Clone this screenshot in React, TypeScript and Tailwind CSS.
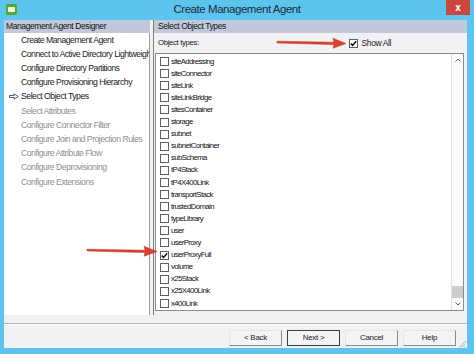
import React from 'react';

const steps = [
  { label: 'Create Management Agent', enabled: true },
  { label: 'Connect to Active Directory Lightweight Directory Services', enabled: true },
  { label: 'Configure Directory Partitions', enabled: true },
  { label: 'Configure Provisioning Hierarchy', enabled: true },
  { label: 'Select Object Types', enabled: true, current: true },
  { label: 'Select Attributes', enabled: false },
  { label: 'Configure Connector Filter', enabled: false },
  { label: 'Configure Join and Projection Rules', enabled: false },
  { label: 'Configure Attribute Flow', enabled: false },
  { label: 'Configure Deprovisioning', enabled: false },
  { label: 'Configure Extensions', enabled: false },
];

const objectTypes = [
  'siteAddressing',
  'siteConnector',
  'siteLink',
  'siteLinkBridge',
  'sitesContainer',
  'storage',
  'subnet',
  'subnetContainer',
  'subSchema',
  'tP4Stack',
  'tP4X400Link',
  'transportStack',
  'trustedDomain',
  'typeLibrary',
  'user',
  'userProxy',
  'userProxyFull',
  'volume',
  'x25Stack',
  'x25X400Link',
  'x400Link',
];

const CheckBox = ({ checked = false }: { checked?: boolean }) => (
  <span className="flex h-[9px] w-[9px] shrink-0 items-center justify-center border border-[#5f5f5f] bg-white">
    {checked && (
      <svg width="7" height="7" viewBox="0 0 7 7">
        <path d="M0.8 3.6 L2.6 5.4 L6.2 1.2" fill="none" stroke="#111" strokeWidth="1.5" />
      </svg>
    )}
  </span>
);

const Button = ({ label, isDefault }: { label: string; isDefault?: boolean }) => (
  <div
    className={
      'flex h-[16px] w-[53px] items-center justify-center bg-[#f4f3f5] text-[8px] tracking-[-0.3px] text-[#222] ' +
      (isDefault
        ? 'border border-[#3c3c3c]'
        : 'border border-t-[#e4e4e4] border-l-[#e4e4e4] border-r-[#8a8a8a] border-b-[#8a8a8a]')
    }
  >
    {label}
  </div>
);

const RedArrow = ({ className, width }: { className: string; width: number }) => (
  <svg className={className} width={width} height="12" viewBox={`0 0 ${width} 12`}>
    <path
      d={`M1 4.2 L${width - 13} 5.2 L${width - 14} 1.2 L${width - 1} 6.6 L${width - 14} 11.2 L${width - 13} 7.6 L1 6 Z`}
      fill="#d8402f"
      stroke="#c23525"
      strokeWidth="0.5"
      strokeLinejoin="round"
    />
  </svg>
);

export default function App() {
  return (
    <div className="relative h-[354px] w-[474px] overflow-hidden bg-[#5cc5ef] font-['Liberation_Sans',Arial,sans-serif]">
      {/* title bar */}
      <div className="relative flex h-[20px] items-center justify-center">
        <div className="absolute left-[6px] top-[4px] flex h-[11px] w-[11px] items-center justify-center rounded-[1px] bg-[#5aa632]">
          <div className="h-[5px] w-[7px] rounded-[1px] bg-[#e9f5d6]" />
        </div>
        <span className="text-[11.5px] leading-none tracking-[-0.45px] text-[#1d2b3a]">Create Management Agent</span>
        <div className="absolute right-[4px] top-0 flex h-[15px] w-[24px] items-center justify-center bg-[#c9473d] text-[10px] font-bold leading-none text-white">
          x
        </div>
      </div>

      {/* client area */}
      <div className="ml-[4px] flex h-[328px] w-[463px] flex-col bg-[#f2f1f3]">
        <div className="flex h-[295px]">
          {/* left pane */}
          <div className="flex w-[146px] flex-col">
            <div className="flex h-[13px] items-center bg-[#bfc9d9] pl-[2px] text-[8.5px] leading-none tracking-[-0.4px] text-[#111]">
              Management Agent Designer
            </div>
            <div className="flex-1 overflow-hidden border-r border-r-[#9a9a9a] bg-white">
              {steps.map((s) => (
                <div key={s.label} className="flex h-[14.2px] items-center whitespace-nowrap text-[8.7px] leading-none tracking-[-0.5px]">
                  <span className="flex w-[17px] shrink-0 items-center justify-end pr-[2px]">
                    {s.current && (
                      <svg width="10" height="7" viewBox="0 0 10 7">
                        <path d="M0.5 2.5 H5 V0.8 L9.3 3.5 L5 6.2 V4.5 H0.5 Z" fill="#fff" stroke="#2b4a8a" strokeWidth="0.9" />
                      </svg>
                    )}
                  </span>
                  <span className={s.enabled ? 'text-[#1a1a1a]' : 'text-[#8f8f8f]'}>{s.label}</span>
                </div>
              ))}
            </div>
          </div>

          {/* splitter */}
          <div className="w-[4px] border-r border-r-[#7d7d7d]" />

          {/* right pane */}
          <div className="flex flex-1 flex-col">
            <div className="flex h-[13px] items-center bg-[#bfc9d9] pl-[4px] text-[8.5px] leading-none tracking-[-0.4px] text-[#111]">
              Select Object Types
            </div>
            <div className="flex h-[20px] items-center justify-between pl-[4px] pr-[76px] text-[7.8px] tracking-[-0.35px] text-[#1a1a1a]">
              <span>Object types:</span>
              <span className="flex items-center gap-[4px] text-[8.5px] tracking-[-0.4px]">
                <CheckBox checked />
                Show All
              </span>
            </div>
            <div className="ml-[1px] mr-[3px] flex h-[258px] border border-[#8c8c8c] bg-white">
              <div className="flex-1 overflow-hidden pl-[4px] pt-[1.5px]">
                {objectTypes.map((t) => (
                  <div key={t} className="flex h-[12.1px] items-center gap-[2px] text-[7.8px] leading-none tracking-[-0.6px] text-[#111]">
                    <CheckBox checked={t === 'userProxyFull'} />
                    <span>{t}</span>
                  </div>
                ))}
              </div>
              <div className="flex w-[12px] flex-col border-l border-l-[#e2e2e2] bg-[#fbfbfb]">
                <div className="flex h-[12px] items-center justify-center">
                  <svg width="6" height="4" viewBox="0 0 6 4">
                    <path d="M0.5 3.5 L3 1 L5.5 3.5" fill="none" stroke="#606060" strokeWidth="1" />
                  </svg>
                </div>
                <div className="flex flex-1 flex-col justify-end">
                  <div className="h-[12px] bg-[#cdcdcd]" />
                </div>
                <div className="flex h-[12px] items-center justify-center">
                  <svg width="6" height="4" viewBox="0 0 6 4">
                    <path d="M0.5 0.5 L3 3 L5.5 0.5" fill="none" stroke="#606060" strokeWidth="1" />
                  </svg>
                </div>
              </div>
            </div>
          </div>
        </div>

        {/* bottom bar */}
        <div className="mt-[8px] border-t border-t-[#b4b4b4] shadow-[0_1px_0_#ffffff]" />
        <div className="relative mt-[6px] flex justify-end gap-[5px] pr-[11px]">
          <Button label="< Back" />
          <Button label="Next >" isDefault />
          <Button label="Cancel" />
          <Button label="Help" />
          <svg className="absolute bottom-[-2px] right-[1px]" width="8" height="8" viewBox="0 0 8 8">
            <path d="M7.5 1 L1 7.5 M7.5 3.5 L3.5 7.5 M7.5 6 L6 7.5" stroke="#9a9a9a" strokeWidth="0.8" />
          </svg>
        </div>
      </div>

      {/* annotation arrows */}
      <RedArrow className="absolute left-[276px] top-[37px]" width={71} />
      <RedArrow className="absolute left-[86px] top-[245px]" width={72} />
    </div>
  );
}
